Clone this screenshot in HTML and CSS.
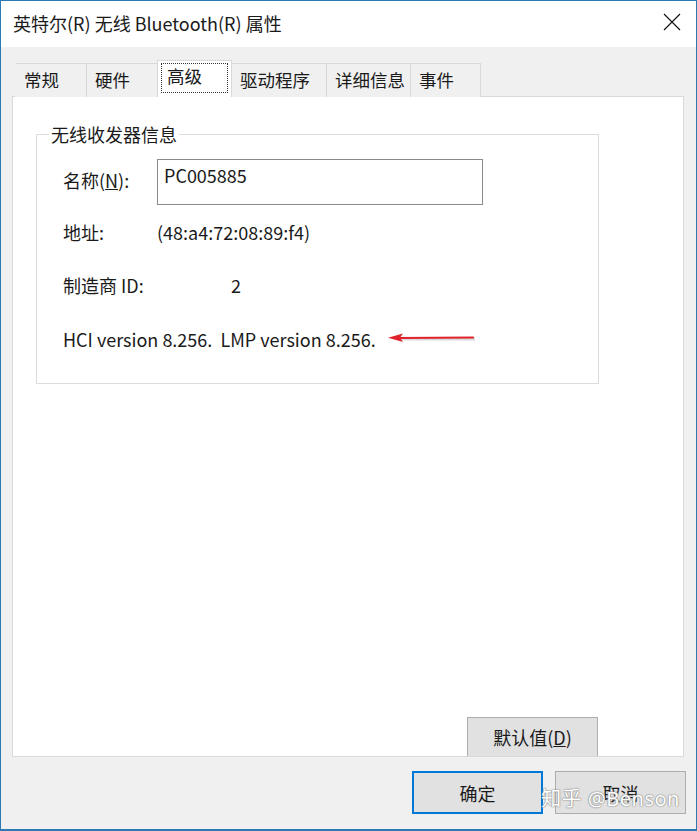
FILE: index.html
```html
<!DOCTYPE html>
<html>
<head>
<meta charset="utf-8">
<link rel="stylesheet" href="styles.css">
</head>
<body>
<div class="window">
  <div class="titlebar">
    <span class="title">英特尔(R) 无线 Bluetooth(R) 属性</span>
    <svg class="close" width="18" height="18" viewBox="0 0 18 18"><path d="M1 1 L17 17 M17 1 L1 17" stroke="#111" stroke-width="1.1" fill="none"/></svg>
  </div>
  <div class="body">
    <div class="tabs">
      <div class="tab t1">常规</div>
      <div class="tab t2">硬件</div>
      <div class="tab active"><span class="focus">高级</span></div>
      <div class="tab t4">驱动程序</div>
      <div class="tab t5">详细信息</div>
      <div class="tab t6">事件</div>
    </div>
    <div class="panel">
      <fieldset class="group">
        <legend>无线收发器信息</legend>
        <div class="row name-row">
          <span class="label">名称(<u>N</u>):</span>
          <div class="textbox">PC005885</div>
        </div>
        <div class="row addr-row">
          <span class="label">地址:</span>
          <span class="value">(48:a4:72:08:89:f4)</span>
        </div>
        <div class="row id-row">
          <span class="label">制造商 ID:</span>
          <span class="value id">2</span>
        </div>
        <div class="row hci-row">
          <span class="hci">HCI version 8.256.  LMP version 8.256.</span>
          <svg class="arrow" width="92" height="14" viewBox="0 0 92 14">
            <path d="M14 8 L88 8" stroke="rgba(0,0,0,0.15)" stroke-width="3"/>
            <path d="M12 7 L86 6.5" stroke="#e0232a" stroke-width="2.2" stroke-linecap="round"/>
            <path d="M1 6.8 L16 2.5 L13 6.8 L16 11 Z" fill="#e0232a"/>
          </svg>
        </div>
      </fieldset>
      <div class="spacer"></div>
      <div class="default-row">
        <button class="btn default">默认值(<u>D</u>)</button>
      </div>
    </div>
    <div class="footer">
      <button class="btn ok">确定</button>
      <button class="btn cancel">取消</button>
      <span class="watermark">知乎 @Benson</span>
    </div>
  </div>
</div>
</body>
</html>
```
FILE: styles.css
```css
* { box-sizing: border-box; }
html, body { margin: 0; padding: 0; }
body {
  width: 697px;
  height: 831px;
  overflow: hidden;
  font-family: "Noto Sans CJK SC", "Noto Sans", sans-serif;
  color: #1a1a1a;
}
.window {
  width: 697px;
  height: 831px;
  border: 1px solid #2b7ab4;
  border-bottom-width: 2px;
  display: flex;
  flex-direction: column;
  background: #f0f0f0;
  position: relative;
}
.titlebar {
  height: 46px;
  background: #fff;
  display: flex;
  align-items: center;
  padding-left: 12px;
  padding-right: 15px;
  flex: none;
}
.title {
  font-size: 18px;
  flex: 1;
  padding-bottom: 2px;
}
.close { margin-top: -4px; }
.body {
  flex: 1;
  display: flex;
  flex-direction: column;
  padding: 14px 12px 0 11px;
  position: relative;
}
.tabs {
  display: flex;
  height: 36px;
  align-items: flex-end;
  padding-left: 3px;
  position: relative;
  z-index: 2;
  margin-bottom: -1px;
}
.tab {
  height: 34px;
  border: 1px solid #d9d9d9;
  border-bottom: none;
  border-right: none;
  background: #f0f0f0;
  font-size: 17.5px;
  line-height: 32px;
  padding-left: 8px;
  color: #1a1a1a;
}
.t1 { width: 71px; border-left-color: #f0f0f0; }
.t2 { width: 71px; }
.tab.active {
  width: 75px;
  height: 37px;
  background: #fff;
  border: 1px solid #d9d9d9;
  border-bottom: none;
  padding: 2px 3px 0 3px;
  line-height: normal;
  margin-bottom: 0;
}
.focus {
  display: block;
  height: 30px;
  border: 1px dotted #333;
  padding-left: 5px;
  line-height: 23px;
}
.t4 { width: 94px; border-left: none; }
.t5 { width: 84px; }
.t6 { width: 71px; border-right: 1px solid #d9d9d9; }
.panel {
  height: 661px;
  background: #fff;
  border: 1px solid #d9d9d9;
  margin-right: 0;
  display: flex;
  flex-direction: column;
  padding: 26px 84px 0 23px;
}
.group {
  margin: 0;
  border: 1px solid #dcdcdc;
  padding: 0 0 0 26px;
  height: 261px;
  min-width: 0;
}
.group legend {
  font-size: 18px;
  padding: 0 2px;
  margin-left: -14px;
  line-height: 22px;
}
.row {
  display: flex;
  align-items: center;
  font-size: 18px;
}
.label { width: 94px; flex: none; }
.name-row { height: 46px; margin-top: 14px; align-items: flex-start; }
.name-row .label { margin-top: 8px; }
.textbox {
  width: 326px;
  height: 46px;
  border: 1px solid #8a8a8a;
  padding: 3px 6px;
  line-height: 24px;
}
.addr-row { margin-top: 14px; height: 26px; }
.id-row { margin-top: 27px; height: 26px; }
.id { margin-left: 74px; }
.hci-row { margin-top: 28px; height: 26px; }
.hci { white-space: pre; }
.arrow { margin-left: 11px; margin-top: -3px; }
.spacer { flex: 1; }
.default-row {
  display: flex;
  justify-content: flex-end;
  padding-right: 1px;
}
.btn {
  font-family: "Noto Sans CJK SC", "Noto Sans", sans-serif;
  font-size: 18px;
  color: #1a1a1a;
  background: #e1e1e1;
  border: 1px solid #adadad;
  padding: 0;
  margin: 0;
}
.default { width: 131px; height: 39px; border-bottom: none; }
.footer {
  display: flex;
  justify-content: flex-end;
  gap: 12px;
  padding-top: 14px;
  position: relative;
}
.ok, .cancel { width: 131px; height: 43px; }
.ok { border: 2px solid #0078d7; }
.cancel { margin-right: -2px; }
.watermark {
  position: absolute;
  right: 4px;
  top: 26px;
  font-family: "Noto Sans", "Noto Sans CJK SC", sans-serif;
  font-size: 20px;
  color: #fff;
  text-shadow: 0 0 1px #888, 0 0 1px #888, 0 0 2px #999;
  letter-spacing: 0.5px;
}
```
